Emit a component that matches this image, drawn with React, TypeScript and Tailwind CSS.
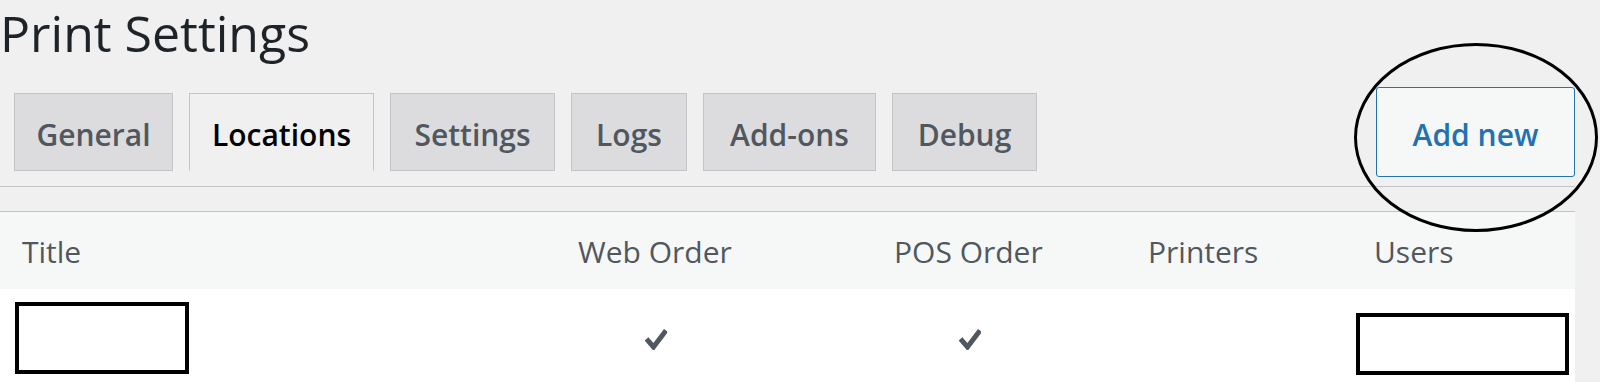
import React from 'react';

// Print Settings - Locations tab
const tabs = [
    { label: 'General', width: 'w-[159px]' },
    { label: 'Locations', width: 'w-[185px]', active: true },
    { label: 'Settings', width: 'w-[165px]' },
    { label: 'Logs', width: 'w-[116px]' },
    { label: 'Add-ons', width: 'w-[173px]' },
    { label: 'Debug', width: 'w-[145px]' },
];

function Check() {
    return (
        <svg width="22" height="22" viewBox="0 0 22 22" fill="none">
            <polyline
                points="1.5,11 8.5,19 21,2.5"
                stroke="#50575e"
                strokeWidth="5"
                strokeLinejoin="miter"
            />
        </svg>
    );
}

function Redacted({ className }: { className: string }) {
    return <div className={`border-4 border-black bg-white ${className}`} />;
}

export default function App() {
    return (
        <div className="relative h-[382px] overflow-hidden bg-[#f0f0f1] font-['Open_Sans',sans-serif]">
            <div className="w-[1575px]">
                {/* Heading */}
                <h1 className="h-[87px] pt-[3px] text-[50px] leading-[60px] font-normal text-[#1d2327]">
                    Print Settings
                </h1>

                {/* Tabs + action */}
                <div className="flex items-center justify-between border-b border-[#c3c4c7] pb-[9px]">
                    <nav className="flex gap-4 pl-[14px]">
                        {tabs.map((tab) => (
                            <a
                                key={tab.label}
                                className={`flex h-[78px] items-center justify-center pt-[4px] text-[30px] font-semibold border border-[#c3c4c7] ${tab.width} ${
                                    tab.active
                                        ? 'bg-[#f0f0f1] text-black border-b-[#f0f0f1]'
                                        : 'bg-[#dcdcde] text-[#50575e]'
                                }`}
                            >
                                {tab.label}
                            </a>
                        ))}
                    </nav>
                    <button className="flex h-[90px] w-[199px] items-center justify-center rounded-[3px] border border-[#2271b1] bg-[#f6f7f7] pt-[4px] text-[30px] font-semibold text-[#2271b1]">
                        Add new
                    </button>
                </div>

                {/* Locations table */}
                <div className="mt-[24px] border-t border-[#c3c4c7]">
                    <div className="grid h-[77px] grid-cols-[556px_316px_254px_226px_223px] bg-[#f6f7f7] pt-[20px] text-[30px] leading-[40px] text-[#50575e]">
                        <div className="pl-[22px]">Title</div>
                        <div className="pl-[22px]">Web Order</div>
                        <div className="pl-[22px]">POS Order</div>
                        <div className="pl-[22px]">Printers</div>
                        <div className="pl-[22px]">Users</div>
                    </div>
                    <div className="grid h-[100px] grid-cols-[556px_316px_254px_226px_223px] items-start bg-white">
                        <div className="pl-[15px] pt-[13px]">
                            <Redacted className="h-[72px] w-[174px]" />
                        </div>
                        <div className="pl-[89px] pt-[39px]">
                            <Check />
                        </div>
                        <div className="pl-[87px] pt-[39px]">
                            <Check />
                        </div>
                        <div />
                        <div className="pl-[4px] pt-[24px]">
                            <Redacted className="h-[62px] w-[213px]" />
                        </div>
                    </div>
                </div>
            </div>

            {/* Hand-drawn circle around the button */}
            <svg
                className="absolute left-[1350px] top-[40px]"
                width="250"
                height="196"
                viewBox="0 0 250 196"
                fill="none"
            >
                <ellipse cx="126" cy="97.5" rx="120.5" ry="93" stroke="black" strokeWidth="3" />
            </svg>
        </div>
    );
}
